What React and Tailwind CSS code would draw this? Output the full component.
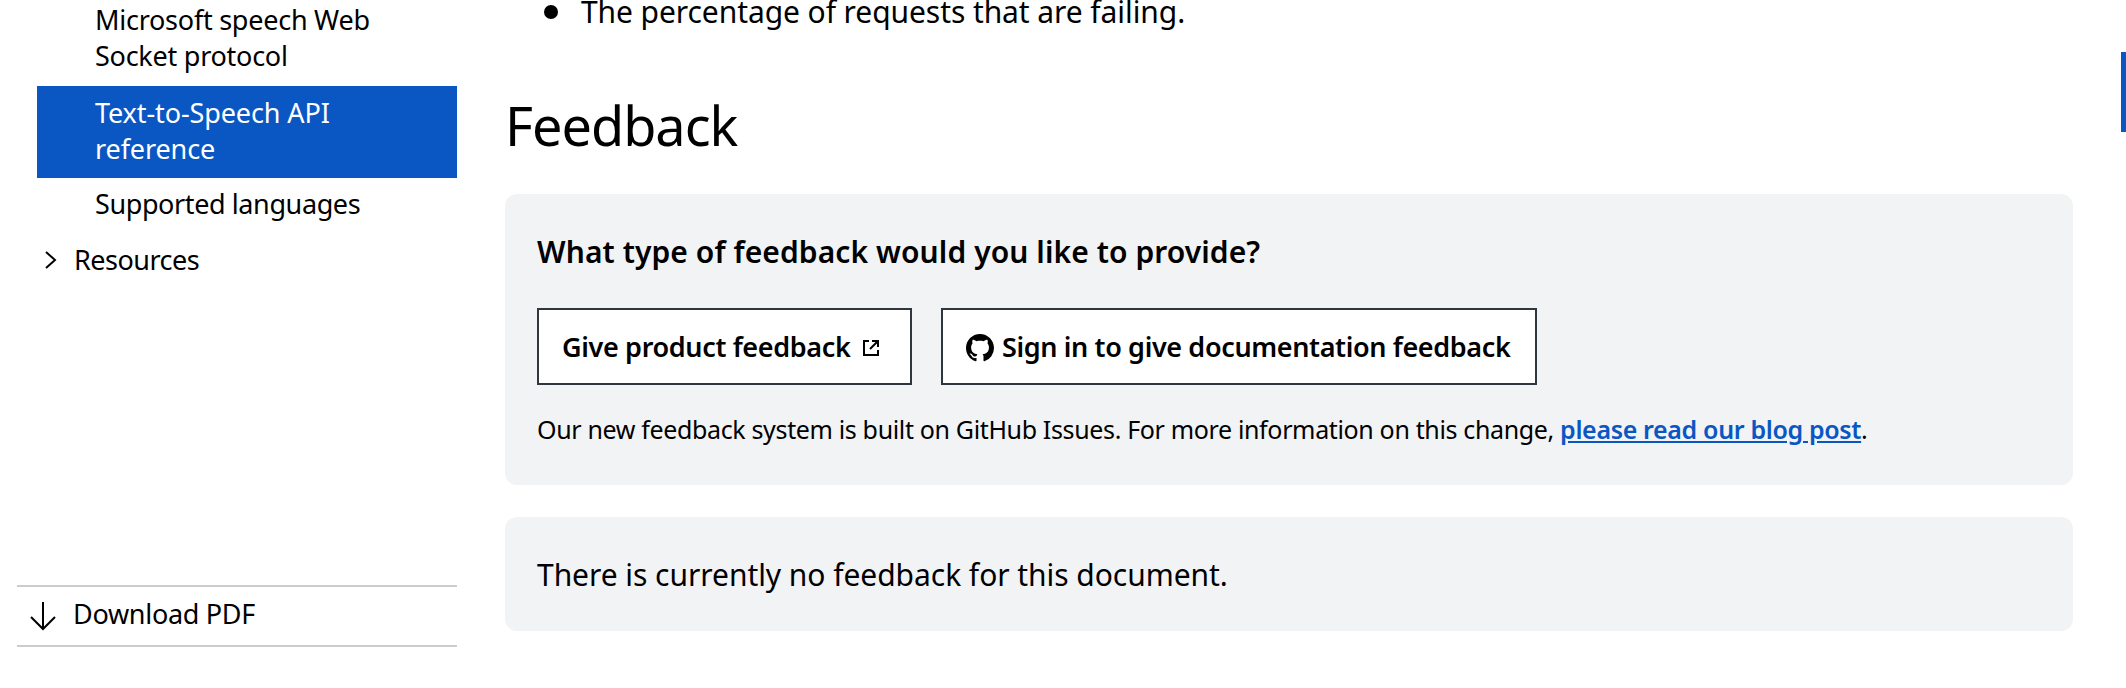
import React from "react";

const font = "font-['Noto_Sans','Open_Sans',sans-serif]";

const Sidebar = () => (
  <div className="w-[457px] h-full shrink-0 flex flex-col justify-between pb-[41px]">
    <div className="pl-[37px] text-[27px] leading-[36px] tracking-[-0.25px] text-black">
      <div className="pl-[58px] pt-[2px] pb-[12px]">
        Microsoft speech Web
        <br />
        Socket protocol
      </div>
      <div className="pl-[58px] pt-[9px] bg-[#0a57c4] text-white h-[92px] tracking-[-0.1px]">
        Text-to-Speech API
        <br />
        reference
      </div>
      <div className="pl-[58px] pt-[8px] pb-[10px] tracking-[-0.4px]">Supported languages</div>
      <div className="flex items-center pt-[10px] tracking-[-0.5px]">
        <svg width="14" height="20" viewBox="0 0 14 20" className="ml-[7px] mr-[16px]" fill="none" stroke="#000" strokeWidth="2">
          <path d="M2 2l9 8-9 8" />
        </svg>
        <span>Resources</span>
      </div>
    </div>
    <div className="ml-[17px] h-[62px] border-y-2 border-[#cccccc] flex items-center text-[27px] tracking-[-0.3px] text-black">
      <svg width="28" height="30" viewBox="0 0 28 30" className="ml-[12px] mr-[16px]" fill="none" stroke="#000" strokeWidth="2">
        <path d="M14 1v27M2 16l12 12 12-12" />
      </svg>
      <span className="-mt-[4px]">Download PDF</span>
    </div>
  </div>
);

const GithubIcon = () => (
  <svg width="28" height="28" viewBox="0 0 16 16" fill="#000" className="mr-[8px]">
    <path d="M8 0C3.58 0 0 3.58 0 8c0 3.54 2.29 6.53 5.47 7.59.4.07.55-.17.55-.38 0-.19-.01-.82-.01-1.49-2.01.37-2.53-.49-2.69-.94-.09-.23-.48-.94-.82-1.13-.28-.15-.68-.52-.01-.53.63-.01 1.08.58 1.23.82.72 1.21 1.87.87 2.33.66.07-.52.28-.87.51-1.07-1.78-.2-3.64-.89-3.64-3.95 0-.87.31-1.59.82-2.15-.08-.2-.36-1.02.08-2.12 0 0 .67-.21 2.2.82.64-.18 1.32-.27 2-.27s1.36.09 2 .27c1.53-1.04 2.2-.82 2.2-.82.44 1.1.16 1.92.08 2.12.51.56.82 1.27.82 2.15 0 3.07-1.87 3.75-3.65 3.95.29.25.54.73.54 1.48 0 1.07-.01 1.93-.01 2.2 0 .21.15.46.55.38A8.01 8.01 0 0016 8c0-4.42-3.58-8-8-8z" />
  </svg>
);

const ExternalIcon = () => (
  <svg width="16" height="16" viewBox="0 0 16 16" fill="none" stroke="#000" strokeWidth="2" className="ml-[12px]">
    <path d="M6 1H1v14h14V10M9 1h6v6M15 1L7 9" />
  </svg>
);

const Main = () => (
  <div className="ml-[48px] w-[1568px] shrink-0 text-black">
    <div className="h-[24px] flex items-center text-[30px] leading-[36px] tracking-[-0.08px]">
      <span className="w-[14px] h-[14px] rounded-full bg-black ml-[39px] mr-[23px]"></span>
      <span>The percentage of requests that are failing.</span>
    </div>
    <h2 className="mt-[65px] text-[54px] leading-[72px] tracking-[-1px] font-normal">Feedback</h2>
    <div className="mt-[33px] h-[291px] bg-[#f2f3f5] rounded-[12px] px-[32px] pt-[38px]">
      <h3 className="text-[30px] leading-[40px] font-semibold tracking-[0.08px]">What type of feedback would you like to provide?</h3>
      <div className="mt-[36px] flex gap-[29px]">
        <div className="h-[77px] w-[375px] border-2 border-[#2f3640] bg-white flex items-center pl-[23px] pt-[2px] text-[27px] font-semibold tracking-[-0.35px]">
          Give product feedback
          <ExternalIcon />
        </div>
        <div className="h-[77px] w-[596px] border-2 border-[#2f3640] bg-white flex items-center pl-[23px] pt-[2px] text-[27px] font-semibold tracking-[-0.37px]">
          <GithubIcon />
          Sign in to give documentation feedback
        </div>
      </div>
      <p className="mt-[26px] text-[25px] leading-[36px] tracking-[-0.35px]">
        Our new feedback system is built on GitHub Issues. For more information on this change,{" "}
        <a href="#" className="text-[#0a57c4] font-semibold underline">please read our blog post</a>.
      </p>
    </div>
    <div className="mt-[32px] h-[114px] bg-[#f2f3f5] rounded-[12px] px-[32px] flex items-center text-[30px] tracking-[-0.05px]">
      There is currently no feedback for this document.
    </div>
  </div>
);

const App = () => {
  return (
    <div className={`relative h-[688px] w-[2126px] overflow-hidden bg-white flex ${font}`}>
      <Sidebar />
      <Main />
      {/* page scroll indicator */}
      <div className="absolute right-0 top-[52px] w-[5px] h-[80px] bg-[#0a57c4]"></div>
    </div>
  );
};

export default App;
